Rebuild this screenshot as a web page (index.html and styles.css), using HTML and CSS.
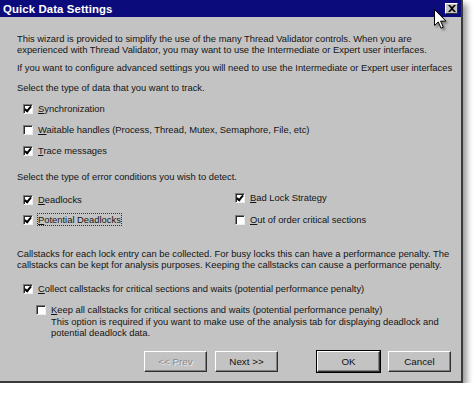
FILE: index.html
```html
<!DOCTYPE html>
<html lang="en">
<head>
  <meta charset="UTF-8" />
  <title>Quick Data Settings</title>
  <link rel="stylesheet" href="styles.css">
</head>
<body>
  <div class="window">
    <div class="titlebar">
      <span class="title">Quick Data Settings</span>
      <span class="close">
        <svg width="8" height="7" viewBox="0 0 8 7"><path d="M0 0h2l2 2 2-2h2L5 3.5 8 7H6L4 5 2 7H0l3-3.5z" fill="#000"/></svg>
      </span>
    </div>

    <div class="content">
      <p class="intro">This wizard is provided to simplify the use of the many Thread Validator controls. When you are<br>experienced with Thread Validator, you may want to use the Intermediate or Expert user interfaces.</p>
      <p class="line advanced">If you want to configure advanced settings you will need to use the Intermediate or Expert user interfaces</p>
      <p class="line track">Select the type of data that you want to track.</p>

      <div class="checks">
        <label class="check"><span class="box on"></span><span><u>S</u>ynchronization</span></label>
        <label class="check"><span class="box"></span><span><u>W</u>aitable handles (Process, Thread, Mutex, Semaphore, File, etc)</span></label>
        <label class="check"><span class="box on"></span><span><u>T</u>race messages</span></label>
      </div>

      <p class="line errors">Select the type of error conditions you wish to detect.</p>

      <div class="grid">
        <label class="check"><span class="box on"></span><span><u>D</u>eadlocks</span></label>
        <label class="check up"><span class="box on"></span><span><u>B</u>ad Lock Strategy</span></label>
        <label class="check"><span class="box on"></span><span class="focus"><u>P</u>otential Deadlocks</span></label>
        <label class="check"><span class="box"></span><span><u>O</u>ut of order critical sections</span></label>
      </div>

      <p class="para">Callstacks for each lock entry can be collected. For busy locks this can have a performance penalty. The<br>callstacks can be kept for analysis purposes. Keeping the callstacks can cause a performance penalty.</p>

      <label class="check collect"><span class="box on"></span><span><u>C</u>ollect callstacks for critical sections and waits (potential performance penalty)</span></label>

      <div class="keep">
        <span class="box"></span>
        <div>
          <div><u>K</u>eep all callstacks for critical sections and waits (potential performance penalty)</div>
          <div>This option is required if you want to make use of the analysis tab for displaying deadlock and<br>potential deadlock data.</div>
        </div>
      </div>

      <div class="buttons">
        <button class="btn" disabled>&lt;&lt; Prev</button>
        <button class="btn">Next &gt;&gt;</button>
        <button class="btn default">OK</button>
        <button class="btn">Cancel</button>
      </div>
    </div>
  </div>

  <svg class="cursor" width="13" height="20" viewBox="0 0 13 20">
    <path d="M0.5 0.5v16l3.8-3.6 2.7 6.3 2.3-1-2.7-6.1h5.3z" fill="#fff" stroke="#000" stroke-width="1"/>
  </svg>
</body>
</html>
```

FILE: styles.css
```css
body {
  margin: 0;
  background: #fff;
  font-family: 'Liberation Sans', Arial, sans-serif;
  font-size: 9.4px;
  color: #141414;
}

.window {
  width: 461px;
  height: 381px;
  background: #c3c3c3;
  border-right: 2px solid #3a3a3a;
  border-bottom: 2px solid #3a3a3a;
  box-shadow: 4px 4px 6px rgba(0, 0, 0, 0.4);
  display: flex;
  flex-direction: column;
}

.titlebar {
  height: 17px;
  background: #0b0b7c;
  display: flex;
  align-items: center;
  justify-content: space-between;
  padding: 0 3px 0 3px;
}

.title {
  color: #fff;
  font-weight: bold;
  font-size: 11.4px;
  letter-spacing: 0.1px;
}

.close {
  width: 11px;
  height: 9px;
  background: #c3c3c3;
  border-top: 1px solid #fff;
  border-left: 1px solid #fff;
  border-right: 1px solid #303030;
  border-bottom: 1px solid #303030;
  display: flex;
  align-items: center;
  justify-content: center;
}

.content {
  padding: 16px 0 0 17px;
  white-space: nowrap;
}

p {
  margin: 0;
}

.intro,
.line,
.para {
  line-height: 11px;
}

.advanced {
  margin-top: 7px;
}

.track {
  margin-top: 9px;
}

.checks {
  display: flex;
  flex-direction: column;
  gap: 10px;
  margin: 10px 0 0 6px;
}

.check {
  display: flex;
  align-items: center;
  gap: 5px;
  height: 11px;
  line-height: 11px;
}

.box {
  width: 8px;
  height: 8px;
  flex: none;
  background: #fff;
  border-top: 1px solid #7a7a7a;
  border-left: 1px solid #7a7a7a;
  border-right: 1px solid #eee;
  border-bottom: 1px solid #eee;
  box-shadow: inset 1px 1px 0 #2a2a2a;
  position: relative;
}

.box.on::after {
  content: "";
  position: absolute;
  left: 2px;
  top: 0;
  width: 2px;
  height: 5px;
  border-right: 2px solid #000;
  border-bottom: 2px solid #000;
  transform: rotate(40deg);
}

.errors {
  margin-top: 15px;
}

.grid {
  display: grid;
  grid-template-columns: 212px 1fr;
  row-gap: 9px;
  margin: 12px 0 0 6px;
}

.check.up {
  margin-top: -2px;
}

.focus {
  outline: 1px dotted #333;
  outline-offset: 0;
}

.para {
  margin-top: 23px;
}

.collect {
  margin: 13px 0 0 6px;
}

.keep {
  display: flex;
  gap: 5px;
  margin: 10px 0 0 19px;
  line-height: 11.5px;
}

.keep .box {
  margin-top: 1px;
}

.buttons {
  display: flex;
  margin: 12px 0 0 127px;
}

.btn {
  width: 63px;
  height: 21px;
  font-family: inherit;
  font-size: 9.8px;
  color: #111;
  background: #c3c3c3;
  border-top: 1px solid #fff;
  border-left: 1px solid #fff;
  border-right: 1px solid #303030;
  border-bottom: 1px solid #303030;
  box-shadow: inset -1px -1px 0 #808080;
  padding: 0;
  margin-right: 8px;
}

.btn:disabled {
  color: #8a8a8a;
  text-shadow: 1px 1px 0 #eee;
}

.btn.default {
  margin-left: 31px;
  outline: 1px solid #000;
}

.cursor {
  position: absolute;
  left: 434px;
  top: 9px;
  filter: drop-shadow(2px 2px 1px rgba(0, 0, 0, 0.35));
}
```
